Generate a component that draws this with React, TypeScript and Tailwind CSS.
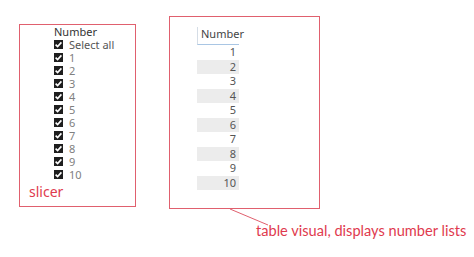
import React from "react";

const NUMBERS = [1, 2, 3, 4, 5, 6, 7, 8, 9, 10];

function CheckBox() {
    return (
        <span className="flex h-[9px] w-[9px] shrink-0 items-center justify-center bg-[#1e1e1e]">
            <svg viewBox="0 0 9 9" className="h-[9px] w-[9px]">
                <path d="M1.6 4.6 L3.6 6.6 L7.4 2.4" fill="none" stroke="#ffffff" strokeWidth="1.6" />
            </svg>
        </span>
    );
}

function Slicer() {
    return (
        <div className="ml-[19px] mt-[24px] flex h-[183px] w-[117px] flex-col border border-[#e0606e] pl-[34px]">
            <div className="h-[13px] text-[11px] leading-[13px] text-[#333333]">Number</div>
            <ul className="flex flex-col">
                {["Select all", ...NUMBERS.map(String)].map((label, i) => (
                    <li key={label} className="flex h-[13px] items-center gap-[6px]">
                        <CheckBox />
                        <span className={`text-[11px] leading-[12px] ${i === 0 ? "text-[#555555]" : "text-[#808080]"}`}>
                            {label}
                        </span>
                    </li>
                ))}
            </ul>
            <div className="-ml-[25px] mt-[2px] text-[14px] leading-[17px] text-[#e03a4e]">slicer</div>
        </div>
    );
}

function TableVisual() {
    return (
        <div className="ml-[33px] mt-[16px] h-[193px] w-[151px] border border-[#e0606e] pl-[27px] pt-[10px]">
            <div className="w-[42px]">
                <div className="h-[18px] border-b border-l border-b-[#a9c6e4] border-l-[#d5dde6] pl-[3px] text-[11px] leading-[13px] text-[#444444]">
                    Number
                </div>
                {NUMBERS.map((n) => (
                    <div
                        key={n}
                        className={`flex h-[14.5px] items-center justify-end pr-[3px] text-[11px] leading-[12px] text-[#555555] ${n % 2 === 0 ? "bg-[#ececec]" : "bg-white"}`}
                    >
                        {n}
                    </div>
                ))}
            </div>
        </div>
    );
}

export default function App() {
    return (
        <div className="relative h-[257px] w-[474px] overflow-hidden bg-white font-['Noto_Sans',sans-serif]">
            <div className="flex items-start">
                <Slicer />
                <TableVisual />
            </div>
            <div className="ml-[256px] mt-[13px] font-['Lato',sans-serif] text-[14.6px] leading-[17px] text-[#e03a4e]">
                table visual, displays number lists
            </div>

            {/* pointer from the table box to its caption */}
            <svg className="pointer-events-none absolute left-0 top-0" width="474" height="257">
                <line x1="230" y1="209" x2="268" y2="225" stroke="#e0606e" strokeWidth="1" />
            </svg>
        </div>
    );
}
